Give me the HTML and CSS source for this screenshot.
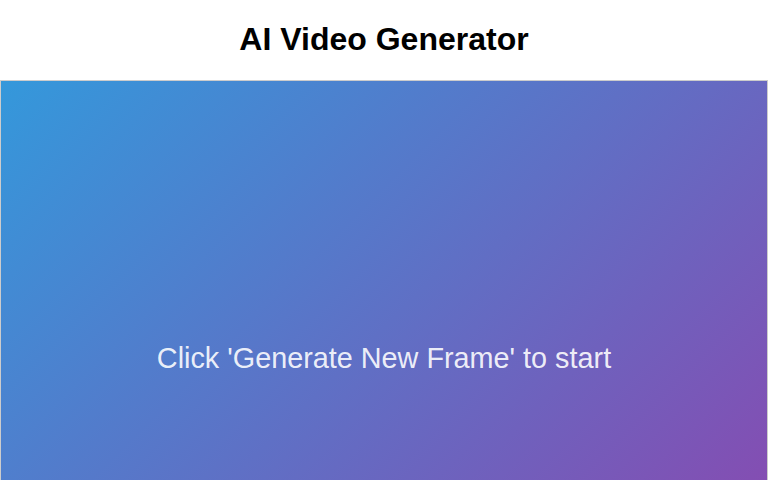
FILE: index.html
```html
<!DOCTYPE html>
<html lang="en">
<head>
<meta charset="utf-8">
<title>AI Video Generator</title>
<link rel="stylesheet" href="styles.css">
</head>
<body>
<h1 class="title">AI Video Generator</h1>
<div class="frame">
  <p class="placeholder">Click 'Generate New Frame' to start</p>
</div>
</body>
</html>
```
FILE: styles.css
```css
html, body {
  margin: 0;
  padding: 0;
  background: #ffffff;
  font-family: "Liberation Sans", Arial, sans-serif;
}
.title {
  margin: 21px 0 22px;
  font-size: 32px;
  font-weight: bold;
  text-align: center;
  color: #000;
  line-height: 37px;
}
.frame {
  box-sizing: border-box;
  width: 100%;
  height: 556px;
  border: 1px solid #cccccc;
  background: linear-gradient(135deg, #3498db, #8e44ad);
  display: flex;
  align-items: center;
  justify-content: center;
}
.placeholder {
  margin: 0;
  font-size: 28.8px;
  color: rgba(255, 255, 255, 0.9);
}
```
